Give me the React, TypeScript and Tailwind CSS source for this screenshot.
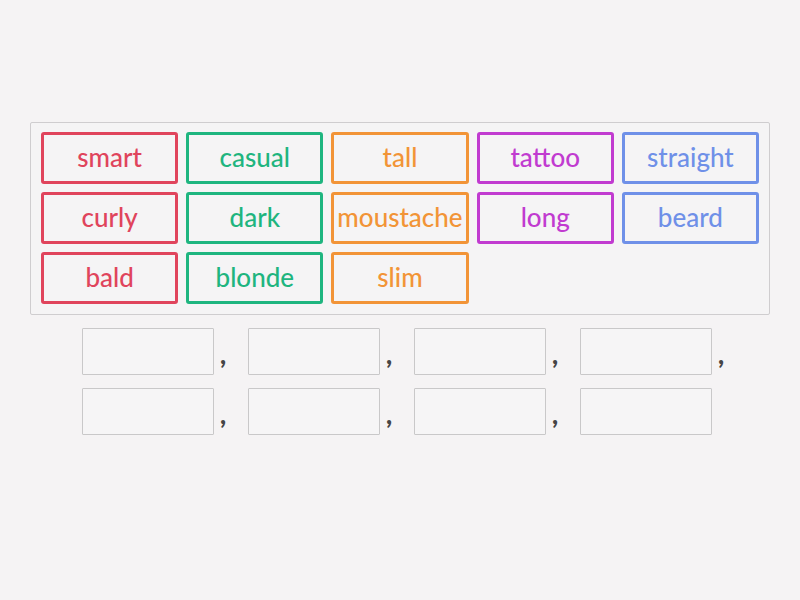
import React from 'react';

const RED = 'border-[#e0445c] text-[#e0445c]';
const GREEN = 'border-[#1fb57f] text-[#1fb57f]';
const ORANGE = 'border-[#f29437] text-[#f29437]';
const PURPLE = 'border-[#c13bd0] text-[#c13bd0]';
const BLUE = 'border-[#6f90e8] text-[#6f90e8]';

const tiles: { word: string; tone: string }[] = [
  { word: 'smart', tone: RED },
  { word: 'casual', tone: GREEN },
  { word: 'tall', tone: ORANGE },
  { word: 'tattoo', tone: PURPLE },
  { word: 'straight', tone: BLUE },
  { word: 'curly', tone: RED },
  { word: 'dark', tone: GREEN },
  { word: 'moustache', tone: ORANGE },
  { word: 'long', tone: PURPLE },
  { word: 'beard', tone: BLUE },
  { word: 'bald', tone: RED },
  { word: 'blonde', tone: GREEN },
  { word: 'slim', tone: ORANGE },
];

const Slot: React.FC<{ comma: boolean }> = ({ comma }) => (
  <div className="flex items-end w-[166px]">
    <div className="w-[132px] h-[47px] border border-[#c9c8c9] bg-[#f6f5f6] rounded-[1px]" />
    {comma && (
      <span className="ml-[6px] mb-[8px] text-[26px] leading-none font-black text-[#454545]">,</span>
    )}
  </div>
);

export default function App() {
  return (
    <div
      className="w-[800px] h-[600px] bg-[#f5f3f4] pt-[122px] overflow-hidden"
      style={{ fontFamily: 'Lato, "Open Sans", sans-serif' }}
    >
      <div className="mx-[30px] w-[740px] border border-[#cfcdcf] bg-[#f5f4f5] rounded-[2px] pt-[9px] pb-[10px] px-[10px]">
        <div className="grid grid-cols-5 gap-x-[8px] gap-y-[8px]">
          {tiles.map((t) => (
            <div
              key={t.word}
              className={`h-[52px] border-[3px] rounded-[3px] flex items-center justify-center text-[26px] font-medium pb-[2px] ${t.tone}`}
            >
              {t.word}
            </div>
          ))}
        </div>
      </div>
      <div className="pl-[82px] pt-[13px] flex flex-col gap-[13px]">
        <div className="flex">
          <Slot comma />
          <Slot comma />
          <Slot comma />
          <Slot comma />
        </div>
        <div className="flex">
          <Slot comma />
          <Slot comma />
          <Slot comma />
          <Slot comma={false} />
        </div>
      </div>
    </div>
  );
}
